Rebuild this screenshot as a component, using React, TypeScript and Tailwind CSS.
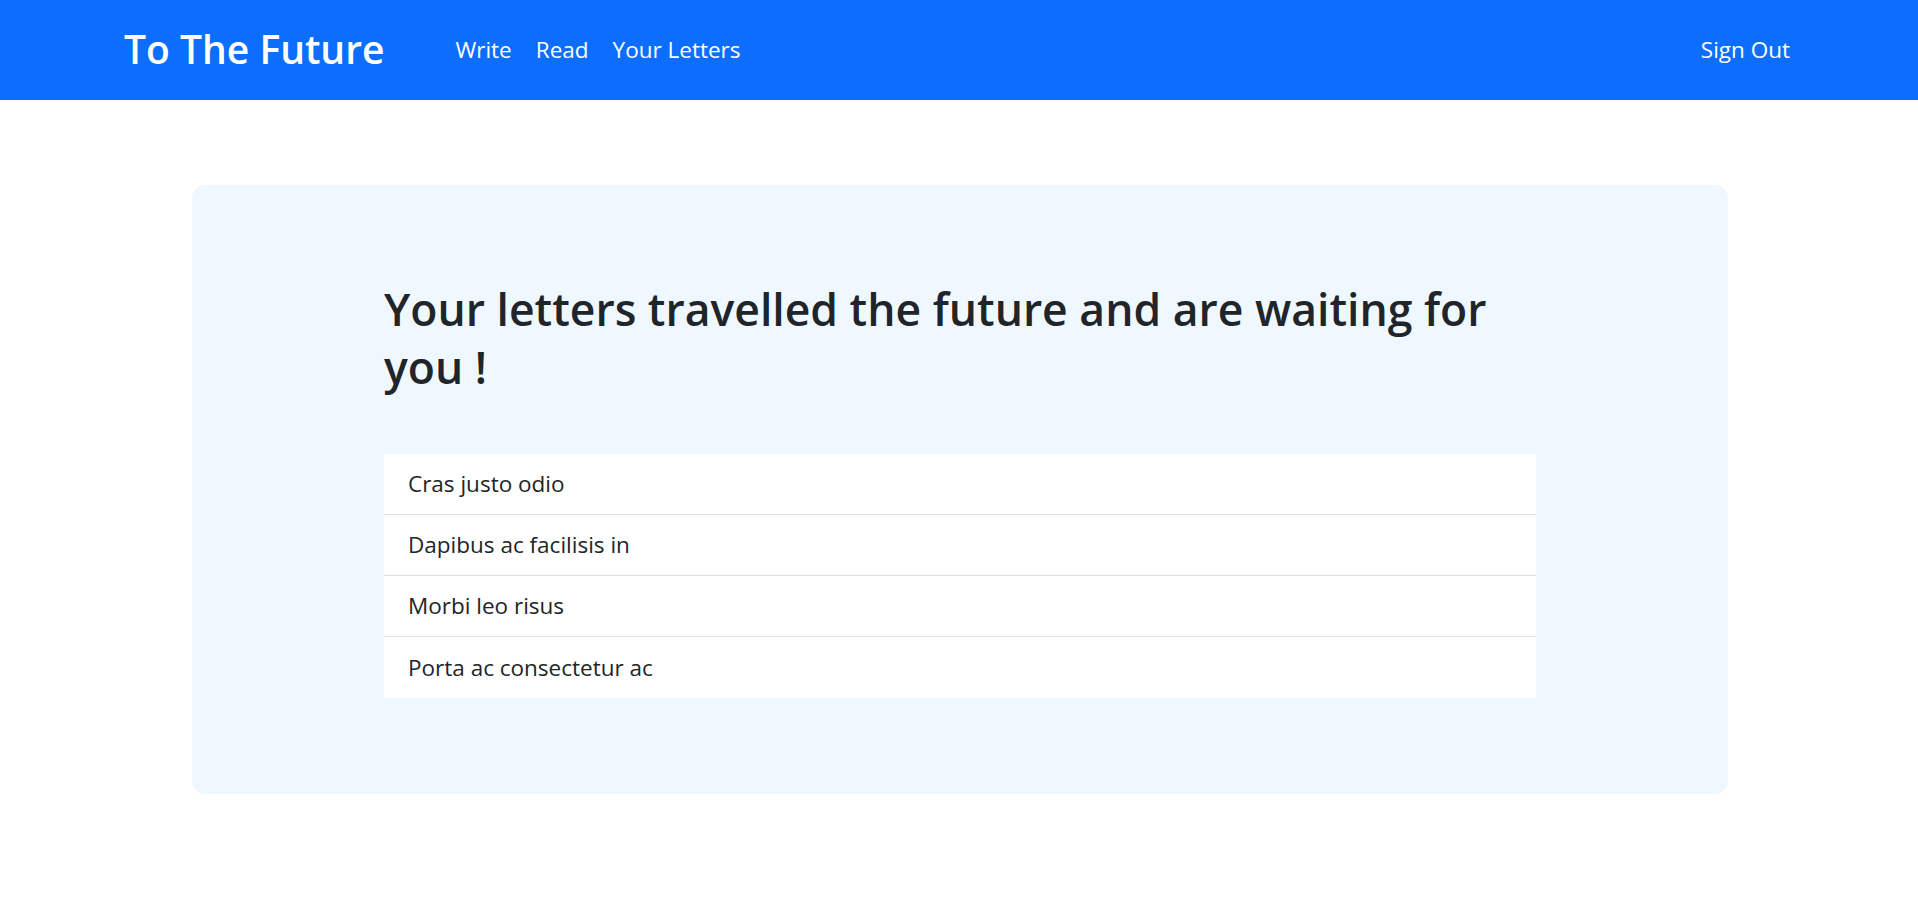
const links = ["Write", "Read", "Your Letters"];

const letters = [
  "Cras justo odio",
  "Dapibus ac facilisis in",
  "Morbi leo risus",
  "Porta ac consectetur ac",
];

export default function App() {
  return (
    <div className="min-h-[907px] bg-white font-['Open_Sans',sans-serif] text-[#212529]">
      <nav className="flex h-[100px] items-center bg-[#0d6efd] pl-[124px] pr-[116px] text-white">
        <a href="#" className="-mt-[4px] text-[39px] font-semibold leading-none">
          To The Future
        </a>
        <ul className="ml-[59px] flex">
          {links.map((l) => (
            <li key={l}>
              <a href="#" className="block px-[12px] py-[10px] text-[22.5px] leading-[1.5]">
                {l}
              </a>
            </li>
          ))}
        </ul>
        <a href="#" className="ml-auto block px-[12px] py-[10px] text-[22.5px] leading-[1.5]">
          Sign Out
        </a>
      </nav>

      <main className="pt-[85px]">
        <section className="ml-[192px] w-[1536px] rounded-[13px] bg-[#f0f8ff] px-[192px] pt-[95px] pb-[96px]">
          <h1 className="text-[44.5px] font-semibold leading-[58px]">
            Your letters travelled the future and are waiting for you !
          </h1>
          <ul className="mt-[58px] bg-white">
            {letters.map((t, i) => (
              <li
                key={t}
                className={
                  "flex h-[61px] items-center px-[24px] text-[22.5px] " +
                  (i < letters.length - 1 ? "border-b border-[#dee2e6]" : "")
                }
              >
                {t}
              </li>
            ))}
          </ul>
        </section>
      </main>
    </div>
  );
}
